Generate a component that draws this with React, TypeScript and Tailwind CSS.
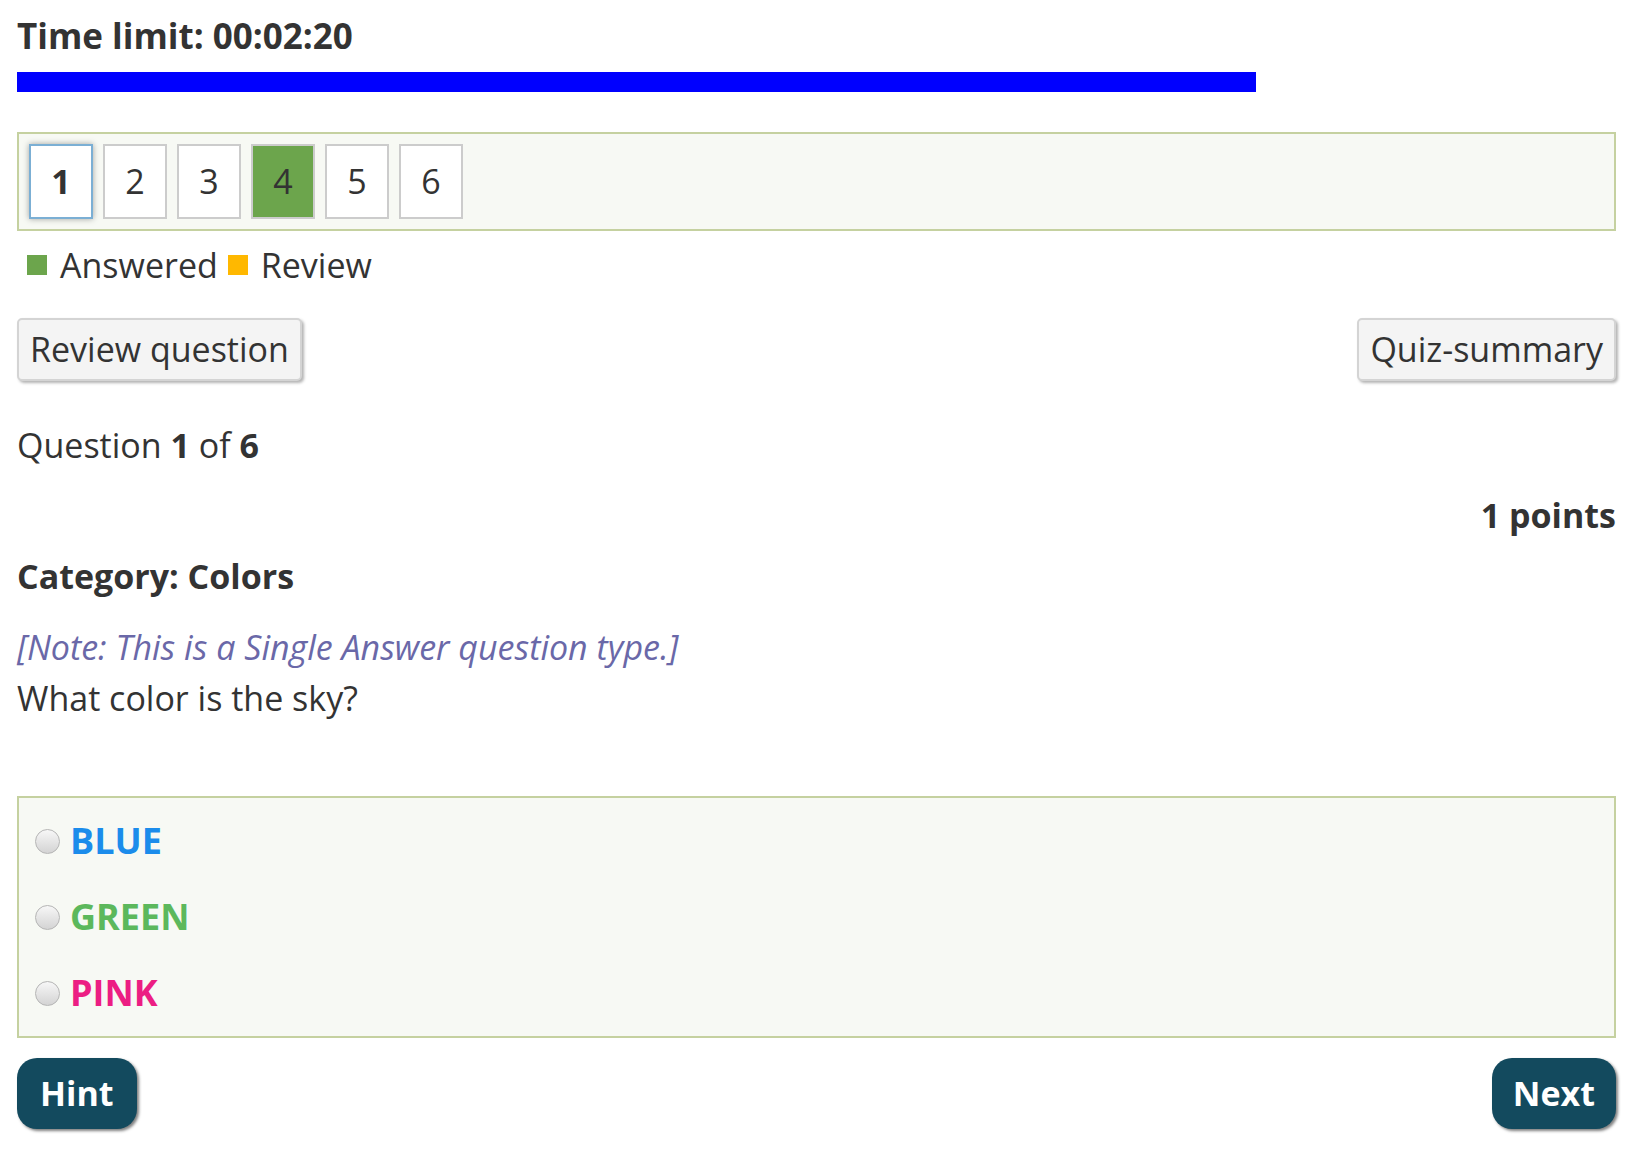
import { useState } from "react";

const questions = [1, 2, 3, 4, 5, 6];
const answered = [4];

const answers = [
  { label: "BLUE", color: "text-[#1b8ceb]" },
  { label: "GREEN", color: "text-[#5cb85c]" },
  { label: "PINK", color: "text-[#ec1e83]" },
];

export default function App() {
  const [current, setCurrent] = useState(1);
  const [choice, setChoice] = useState<string | null>(null);

  return (
    <div className="min-h-screen bg-white font-['Open_Sans',sans-serif] text-[#333] pl-[17px] pr-[31px] pt-[12px]">
      <div className="text-[35px] font-bold leading-[48px]">Time limit: 00:02:20</div>
      <div className="mt-[12px] h-[20px] w-[1239px] bg-[#0000ff]" />

      {/* question list */}
      <div className="mt-[40px] flex gap-[10px] border-2 border-[#c5d1a0] bg-[#f7f9f4] px-[10px] pt-[10px] pb-[10px]">
        {questions.map((n) => {
          const isCurrent = n === current;
          const isAnswered = answered.includes(n);
          return (
            <button
              key={n}
              onClick={() => setCurrent(n)}
              className={`flex h-[75px] w-[64px] items-center justify-center border-2 text-[34px] ${
                isAnswered
                  ? "border-[#cccccc] bg-[#6ca54c]"
                  : isCurrent
                  ? "border-[#7bafd4] bg-white font-bold shadow-[0_0_6px_rgba(0,0,0,0.35)]"
                  : "border-[#cccccc] bg-white"
              }`}
            >
              {n}
            </button>
          );
        })}
      </div>

      {/* legend */}
      <div className="mt-[10px] flex items-center text-[34px] leading-[48px] pl-[10px]">
        <span className="mr-[13px] h-[20px] w-[20px] bg-[#6ca54c]" />
        <span className="mr-[10px]">Answered</span>
        <span className="mr-[13px] h-[20px] w-[20px] bg-[#ffb800]" />
        <span>Review</span>
      </div>

      <div className="mt-[29px] flex items-center justify-between">
        <button className="h-[63px] rounded-[5px] border-2 border-[#d4d4d4] bg-[#f4f4f4] px-[11px] text-[34px] shadow-[2px_2px_3px_rgba(0,0,0,0.3)]">
          Review question
        </button>
        <button className="h-[63px] rounded-[5px] border-2 border-[#d4d4d4] bg-[#f4f4f4] px-[11px] text-[34px] shadow-[2px_2px_3px_rgba(0,0,0,0.3)]">
          Quiz-summary
        </button>
      </div>

      <div className="mt-[40px] text-[34px] leading-[48px]">
        Question <span className="font-bold">{current}</span> of <span className="font-bold">6</span>
      </div>

      <div className="mt-[22px] text-right text-[34px] font-bold leading-[48px]">1 points</div>

      <div className="mt-[13px] text-[34px] font-bold leading-[48px]">Category: Colors</div>

      <div className="mt-[22px] text-[34px] italic leading-[51px] text-[#6a68a8]">
        [Note: This is a Single Answer question type.]
      </div>
      <div className="text-[34px] leading-[51px]">What color is the sky?</div>

      {/* answers */}
      <div className="mt-[72px] flex flex-col gap-[26px] border-2 border-[#c5d1a0] bg-[#f7f9f4] px-[16px] pt-[18px] pb-[18px]">
        {answers.map((a) => (
          <label key={a.label} className="flex cursor-pointer items-center gap-[10px]" onClick={() => setChoice(a.label)}>
            <span className="flex h-[25px] w-[25px] items-center justify-center rounded-full border border-[#b5b5b5] bg-gradient-to-b from-[#f7f7f7] to-[#d4d4d4]">
              {choice === a.label && <span className="h-[11px] w-[11px] rounded-full bg-[#333]" />}
            </span>
            <span className={`text-[36px] font-bold leading-[50px] ${a.color}`}>{a.label}</span>
          </label>
        ))}
      </div>

      <div className="mt-[20px] flex items-center justify-between">
        <button className="h-[71px] rounded-[20px] bg-[#134a5e] px-[23px] text-[34px] font-bold text-white shadow-[2px_2px_3px_rgba(0,0,0,0.5)]">
          Hint
        </button>
        <button className="h-[71px] rounded-[20px] bg-[#134a5e] px-[21px] text-[34px] font-bold text-white shadow-[2px_2px_3px_rgba(0,0,0,0.5)]">
          Next
        </button>
      </div>
    </div>
  );
}
